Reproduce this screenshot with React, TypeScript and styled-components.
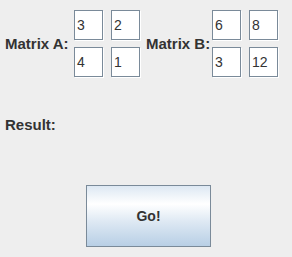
import styled, { createGlobalStyle } from 'styled-components';

const GlobalStyle = createGlobalStyle`
  html, body {
    margin: 0;
    padding: 0;
    background: #eeeeee;
  }
  body {
    font-family: "Liberation Sans", Arial, sans-serif;
    color: #333333;
  }
`;

const Frame = styled.div`
  width: 292px;
  height: 257px;
  background: #eeeeee;
  box-sizing: border-box;
  display: flex;
  flex-direction: column;
`;

const MatrixRow = styled.div`
  display: flex;
  align-items: center;
  padding: 10px 0 0 5px;
`;

const Label = styled.div<{ $width: number; $offset?: number }>`
  width: ${props => props.$width}px;
  margin-left: ${props => props.$offset ?? 0}px;
  font-size: 15px;
  font-weight: 700;
  color: #333333;
  white-space: nowrap;
  line-height: 17px;
`;

const Grid = styled.div`
  display: grid;
  grid-template-columns: 29px 29px;
  grid-template-rows: 30px 30px;
  column-gap: 8px;
  row-gap: 7px;
`;

const Cell = styled.div`
  box-sizing: border-box;
  background: #ffffff;
  border: 1px solid #7a8a99;
  box-shadow: 1px 1px 0 #ffffff;
  font-size: 14px;
  color: #333333;
  padding: 0 0 0 2px;
  display: flex;
  align-items: center;
`;

const ResultRow = styled.div`
  margin-top: 39px;
  padding-left: 5px;
  font-size: 15px;
  font-weight: 700;
  line-height: 17px;
  color: #333333;
`;

const ButtonRow = styled.div`
  margin-top: 52px;
  padding-left: 86px;
`;

const GoButton = styled.div`
  box-sizing: border-box;
  width: 125px;
  height: 62px;
  border: 1px solid #7a8a99;
  background: linear-gradient(
    to bottom,
    #dde8f3 0%,
    #ffffff 30%,
    #dde8f3 60%,
    #b8cfe5 100%
  );
  display: flex;
  align-items: center;
  justify-content: center;
  font-size: 14px;
  font-weight: 700;
  color: #333333;
`;

const MatrixGrid = ({ values }: { values: string[] }) => (
  <Grid>
    {values.map((v, i) => (
      <Cell key={i}>{v}</Cell>
    ))}
  </Grid>
);

export default function App() {
  return (
    <>
      <GlobalStyle />
      <Frame>
        <MatrixRow>
          <Label $width={69}>Matrix A:</Label>
          <MatrixGrid values={['3', '2', '4', '1']} />
          <Label $width={66} $offset={6}>Matrix B:</Label>
          <MatrixGrid values={['6', '8', '3', '12']} />
        </MatrixRow>
        <ResultRow>Result:</ResultRow>
        <ButtonRow>
          <GoButton>Go!</GoButton>
        </ButtonRow>
      </Frame>
    </>
  );
}
